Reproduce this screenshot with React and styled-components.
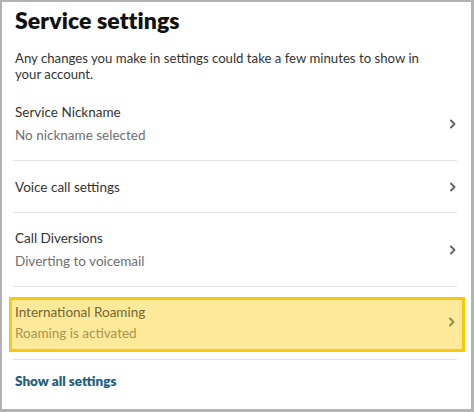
import React from "react";
import styled, { createGlobalStyle } from "styled-components";

const Global = createGlobalStyle`
  html, body { margin: 0; padding: 0; background: #ffffff; }
  * { box-sizing: border-box; }
  body { font-family: Lato, "Liberation Sans", Arial, sans-serif; }
`;

const Frame = styled.div`
  width: 474px;
  height: 412px;
  border-style: solid;
  border-color: #b3b3b3;
  border-width: 2px 3px 3px 2px;
  background: #ffffff;
  padding: 0 6px 0 7px;
  overflow: hidden;
`;

const Title = styled.h1`
  margin: 0;
  padding: 4px 0 0 6px;
  font-size: 23px;
  line-height: 28px;
  font-weight: 800;
  color: #111111;
  letter-spacing: 0.1px;
`;

const Intro = styled.p`
  margin: 17px 0 0 6px;
  font-size: 13.2px;
  line-height: 15.5px;
  color: #333333;
`;

const List = styled.div`
  margin-top: 5px;
  display: flex;
  flex-direction: column;
`;

const Row = styled.div`
  display: flex;
  align-items: center;
  justify-content: space-between;
  margin: 0 8px 0 4px;
  padding: 0 0 0 2px;
  height: ${(p) => (p.$single ? "52px" : "74px")};
  border-bottom: 1px solid #e2e2e2;
`;

const Highlight = styled.div`
  display: flex;
  align-items: flex-start;
  justify-content: space-between;
  margin: 10px 0 7px 0;
  height: 55px;
  padding: 5px 0 0 3px;
  border: 3px solid #f7c80f;
  background: #fde99a;
`;

const Texts = styled.div`
  display: flex;
  flex-direction: column;
  gap: ${(p) => p.$gap || 9}px;
`;

const Label = styled.span`
  font-size: 13.5px;
  line-height: 14px;
  color: ${(p) => p.$color || "#333333"};
`;

const Sub = styled.span`
  font-size: 13.5px;
  line-height: 14px;
  color: ${(p) => p.$color || "#6e6e6e"};
`;

const Chevron = styled.svg`
  width: 8px;
  height: 10px;
  margin-right: ${(p) => p.$mr || 0}px;
  margin-top: ${(p) => p.$mt || 0}px;
  flex: none;
`;

const Divider = styled.div`
  margin: 0 8px 0 4px;
  border-top: 1px solid #e2e2e2;
`;

const ShowAll = styled.a`
  display: block;
  margin: 14px 0 0 6px;
  font-size: 13.5px;
  line-height: 14px;
  font-weight: 800;
  color: #225f7d;
  text-decoration: none;
`;

function Arrow({ color = "#666666", mr, mt }) {
  return (
    <Chevron viewBox="0 0 8 10" $mr={mr} $mt={mt}>
      <path d="M2 1.5 L5.5 5 L2 8.5" fill="none" stroke={color} strokeWidth="2" strokeLinecap="round" strokeLinejoin="round" />
    </Chevron>
  );
}

export default function App() {
  return (
    <>
      <Global />
      <Frame>
        <Title>Service settings</Title>
        <Intro>
          Any changes you make in settings could take a few minutes to show in
          <br />
          your account.
        </Intro>
        <List>
          <Row>
            <Texts>
              <Label>Service Nickname</Label>
              <Sub>No nickname selected</Sub>
            </Texts>
            <Arrow />
          </Row>
          <Row $single>
            <Texts>
              <Label>Voice call settings</Label>
            </Texts>
            <Arrow />
          </Row>
          <Row>
            <Texts>
              <Label>Call Diversions</Label>
              <Sub>Diverting to voicemail</Sub>
            </Texts>
            <Arrow />
          </Row>
          <Highlight>
            <Texts $gap={7}>
              <Label $color="#75672e">International Roaming</Label>
              <Sub $color="#a8964f">Roaming is activated</Sub>
            </Texts>
            <Arrow color="#9a8a4c" mr={6} mt={12} />
          </Highlight>
          <Divider />
        </List>
        <ShowAll href="#">Show all settings</ShowAll>
      </Frame>
    </>
  );
}
